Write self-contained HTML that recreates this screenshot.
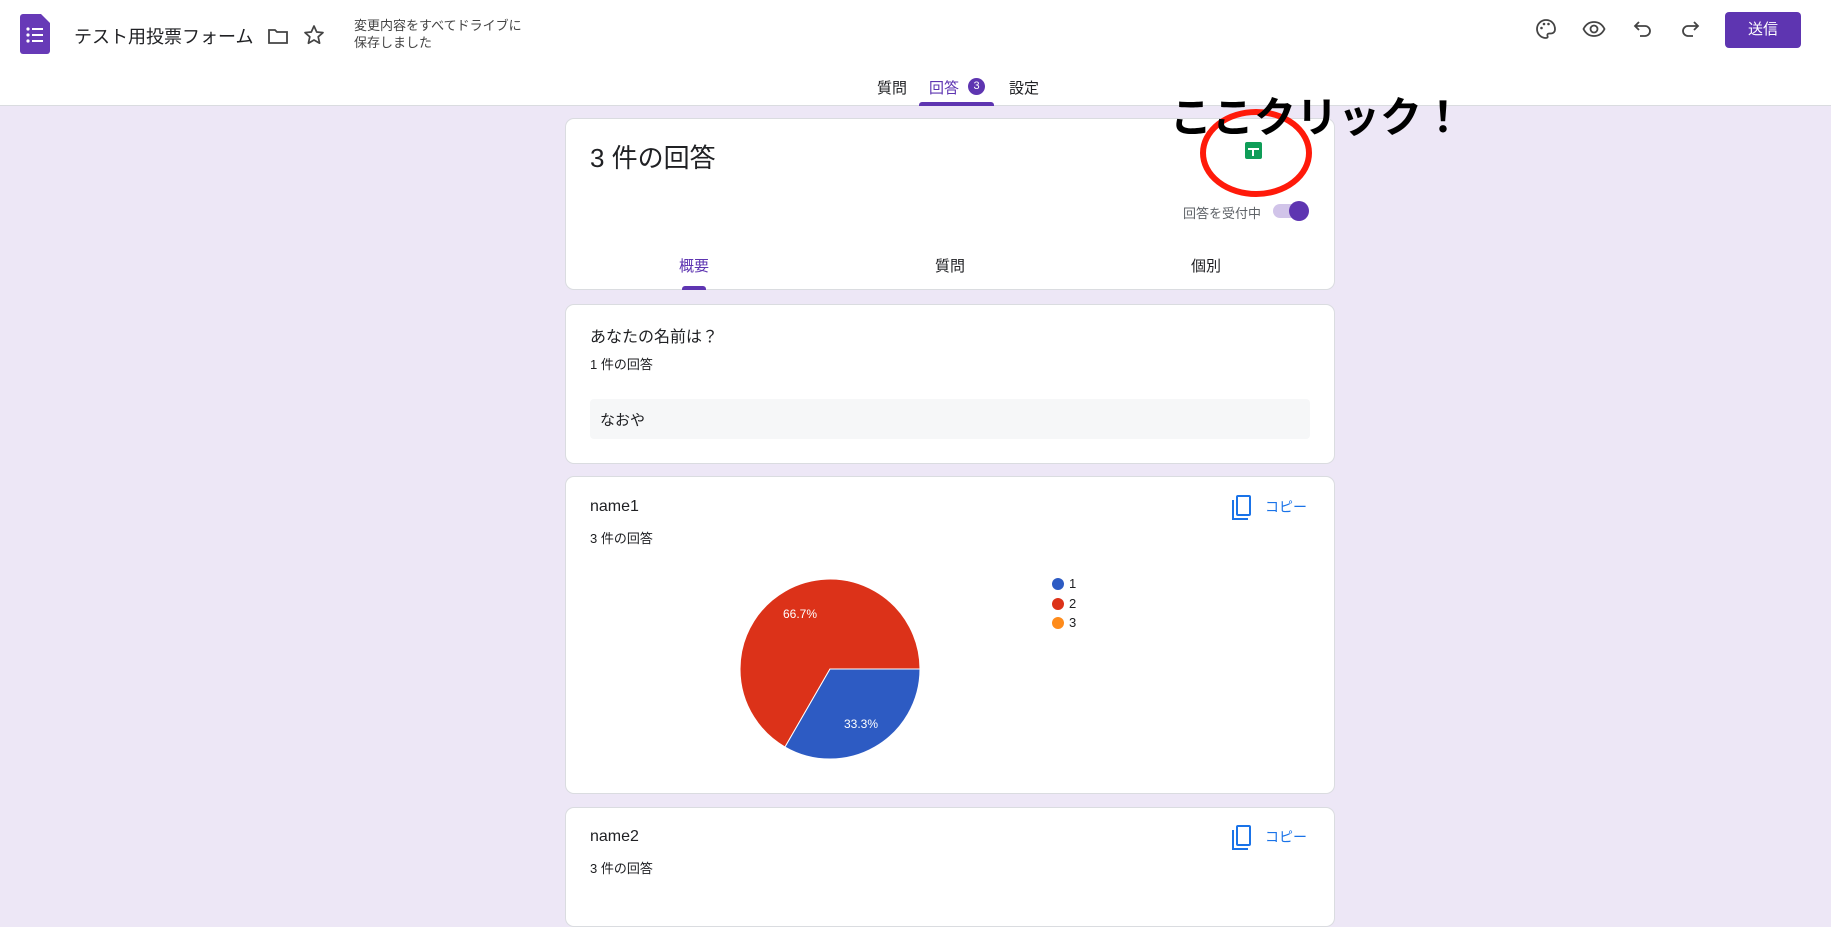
<!DOCTYPE html>
<html><head><meta charset="utf-8"><style>
*{box-sizing:border-box;margin:0;padding:0}
body{width:1831px;height:873px;overflow:hidden;background:#ede7f6;font-family:"Liberation Sans","Noto Sans CJK JP",sans-serif;color:#202124;position:relative}
.a{position:absolute;white-space:nowrap}
.hdr{position:absolute;left:0;top:0;width:1831px;height:106px;background:#fff;border-bottom:1px solid #dadce0}
.card{position:absolute;left:565px;width:770px;background:#fff;border:1px solid #dadce0;border-radius:9px}
</style></head><body>
<div class="hdr"></div>
<svg class="a" style="left:20px;top:14px" width="30" height="40" viewBox="0 0 30 40"><path d="M0 3a3 3 0 0 1 3-3h18l9 9v28a3 3 0 0 1-3 3H3a3 3 0 0 1-3-3z" fill="#673ab7"/><g fill="#fff"><circle cx="8" cy="15" r="1.6"/><circle cx="8" cy="21" r="1.6"/><circle cx="8" cy="27" r="1.6"/><rect x="12" y="14" width="11" height="2"/><rect x="12" y="20" width="11" height="2"/><rect x="12" y="26" width="11" height="2"/></g></svg>
<div class="a" style="left:74px;top:23px;font-size:18px">テスト用投票フォーム</div>
<svg class="a" style="left:266px;top:24px" width="24" height="24" viewBox="0 0 24 24"><path d="M3 6h6l2 2h10v11H3z" fill="none" stroke="#444" stroke-width="1.8"/></svg>
<svg class="a" style="left:302px;top:23px" width="24" height="24" viewBox="0 0 24 24"><path d="M12 3l2.7 6 6.3.6-4.8 4.2 1.4 6.4L12 17l-5.6 3.2 1.4-6.4L3 9.6 9.3 9z" fill="none" stroke="#444" stroke-width="1.7" stroke-linejoin="round"/></svg>
<div class="a" style="left:354px;top:17px;font-size:13px;line-height:17px;color:#444">変更内容をすべてドライブに<br>保存しました</div>
<svg class="a" style="left:1534px;top:17px" width="24" height="24" viewBox="0 0 24 24"><path d="M12 3a9 9 0 0 0 0 18c1.5 0 2-1 1.5-2s0-2.5 1.5-2.5h2a4 4 0 0 0 4-4C21 6.5 17 3 12 3z" fill="none" stroke="#444" stroke-width="1.8"/><circle cx="7.5" cy="11" r="1.3" fill="#444"/><circle cx="10" cy="7" r="1.3" fill="#444"/><circle cx="14.5" cy="7" r="1.3" fill="#444"/></svg>
<svg class="a" style="left:1582px;top:17px" width="24" height="24" viewBox="0 0 24 24"><path d="M1.5 12C4 7 8 5 12 5s8 2 10.5 7C20 17 16 19 12 19s-8-2-10.5-7z" fill="none" stroke="#444" stroke-width="1.8"/><circle cx="12" cy="12" r="3.5" fill="none" stroke="#444" stroke-width="1.8"/></svg>
<svg class="a" style="left:1631px;top:17px" width="24" height="24" viewBox="0 0 24 24"><path d="M8 5L4 9l4 4M4 9h10a5 5 0 0 1 0 10H9" fill="none" stroke="#444" stroke-width="1.8"/></svg>
<svg class="a" style="left:1678px;top:17px" width="24" height="24" viewBox="0 0 24 24"><path d="M16 5l4 4-4 4M20 9H10a5 5 0 0 0 0 10h5" fill="none" stroke="#444" stroke-width="1.8"/></svg>
<div class="a" style="left:1725px;top:12px;width:76px;height:36px;background:#5e35b1;border-radius:4px;color:#fff;font-size:15px;text-align:center;line-height:36px">送信</div>
<div class="a" style="left:877px;top:77px;font-size:15px;color:#202124">質問</div>
<div class="a" style="left:929px;top:77px;font-size:15px;color:#5e35b1">回答</div>
<div class="a" style="left:968px;top:78px;width:17px;height:17px;border-radius:50%;background:#5e35b1;color:#fff;font-size:11px;text-align:center;line-height:17px">3</div>
<div class="a" style="left:1009px;top:77px;font-size:15px">設定</div>
<div class="a" style="left:919px;top:102px;width:75px;height:4px;background:#5e35b1;border-radius:3px 3px 0 0"></div>

<div class="card" style="top:118px;height:172px"></div>
<div class="a" style="left:590px;top:138px;font-size:26px">3 件の回答</div>
<div class="a" style="left:1245px;top:142px;width:17px;height:17px;background:#0f9d58;border-radius:2px"><div style="position:absolute;left:3px;top:6px;width:11px;height:2px;background:#fff"></div><div style="position:absolute;left:7px;top:6px;width:2px;height:8px;background:#fff"></div></div>
<div class="a" style="left:1183px;top:203px;font-size:13px;color:#5f6368">回答を受付中</div>
<div class="a" style="left:1273px;top:204px;width:34px;height:14px;border-radius:7px;background:#d1c4e9"></div>
<div class="a" style="left:1289px;top:201px;width:20px;height:20px;border-radius:50%;background:#5e35b1"></div>
<div class="a" style="left:679px;top:255px;font-size:15px;color:#5e35b1">概要</div>
<div class="a" style="left:935px;top:255px;font-size:15px">質問</div>
<div class="a" style="left:1191px;top:255px;font-size:15px">個別</div>
<div class="a" style="left:682px;top:286px;width:24px;height:4px;background:#5e35b1;border-radius:3px 3px 0 0"></div>

<div class="card" style="top:304px;height:160px"></div>
<div class="a" style="left:590px;top:323px;font-size:16px">あなたの名前は？</div>
<div class="a" style="left:590px;top:354px;font-size:13px">1 件の回答</div>
<div class="a" style="left:590px;top:399px;width:720px;height:40px;background:#f6f7f8;border-radius:4px"></div>
<div class="a" style="left:600px;top:409px;font-size:15px">なおや</div>

<div class="card" style="top:476px;height:318px"></div>
<div class="a" style="left:590px;top:498px;font-size:16px">name1</div>
<div class="a" style="left:590px;top:528px;font-size:13px">3 件の回答</div>
<svg class="a" style="left:1230px;top:495px" width="24" height="26" viewBox="0 0 24 26"><path d="M3 5v19h15" fill="none" stroke="#1a73e8" stroke-width="2"/><rect x="7" y="1" width="13" height="19" rx="1" fill="none" stroke="#1a73e8" stroke-width="2"/></svg>
<div class="a" style="left:1265px;top:497px;font-size:14px;color:#1a73e8">コピー</div>
<svg class="a" style="left:740px;top:579px" width="180" height="180" viewBox="0 0 180 180"><path d="M90 90L180 90A90 90 0 1 0 45 168Z" fill="#dc3219" stroke="#fff" stroke-width="1"/><path d="M90 90L45 168A90 90 0 0 0 180 90Z" fill="#2d5bc3" stroke="#fff" stroke-width="1"/><text x="43" y="39" fill="#fff" font-size="12" font-family="Liberation Sans">66.7%</text><text x="104" y="149" fill="#fff" font-size="12" font-family="Liberation Sans">33.3%</text></svg>
<div class="a" style="left:1052px;top:578px;width:12px;height:12px;border-radius:50%;background:#2d5bc3"></div>
<div class="a" style="left:1069px;top:576px;font-size:13px">1</div>
<div class="a" style="left:1052px;top:598px;width:12px;height:12px;border-radius:50%;background:#dc3219"></div>
<div class="a" style="left:1069px;top:596px;font-size:13px">2</div>
<div class="a" style="left:1052px;top:617px;width:12px;height:12px;border-radius:50%;background:#fe8b1b"></div>
<div class="a" style="left:1069px;top:615px;font-size:13px">3</div>

<div class="card" style="top:807px;height:120px"></div>
<div class="a" style="left:590px;top:828px;font-size:16px">name2</div>
<div class="a" style="left:590px;top:858px;font-size:13px">3 件の回答</div>
<svg class="a" style="left:1230px;top:825px" width="24" height="26" viewBox="0 0 24 26"><path d="M3 5v19h15" fill="none" stroke="#1a73e8" stroke-width="2"/><rect x="7" y="1" width="13" height="19" rx="1" fill="none" stroke="#1a73e8" stroke-width="2"/></svg>
<div class="a" style="left:1265px;top:827px;font-size:14px;color:#1a73e8">コピー</div>

<svg class="a" style="left:1198px;top:106px" width="116" height="94" viewBox="0 0 116 94"><ellipse cx="58" cy="47" rx="53" ry="41" fill="none" stroke="#ff1a0a" stroke-width="6"/></svg>
<div class="a" style="left:1170px;top:84px;font-size:42px;font-weight:bold;color:#000;letter-spacing:0px">ここクリック！</div>
</body></html>
